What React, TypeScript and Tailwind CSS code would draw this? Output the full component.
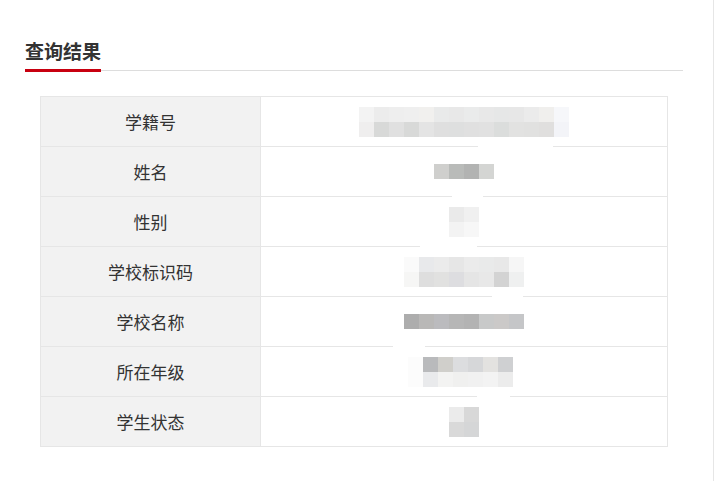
import React from "react";

type Mosaic = { cells: string[][]; offset?: number };

const rows: { label: string; mosaic: Mosaic }[] = [
    {
        label: "学籍号",
        mosaic: {
            cells: [
                ["#f3f3f3", "#ececec", "#eeeeee", "#efefef", "#f1f0ee", "#e9eaea", "#e8e8e8", "#eaebeb", "#e8e8e8", "#e6e7e7", "#e7e7e7", "#ebebeb", "#f0efed", "#f6f7fa"],
                ["#efeeee", "#d8d9d8", "#e0e0e0", "#d8d9d8", "#e4e4e4", "#dfdfdf", "#dedfdf", "#e0e0e0", "#e1e1e1", "#dbdddc", "#e2e2e1", "#e1e1e0", "#e0dfde", "#f3f4f8"],
            ],
        },
    },
    { label: "姓名", mosaic: { cells: [["#cfcfcd", "#b9bbb9", "#b2b3b2", "#d4d5d3"]] } },
    {
        label: "性别",
        mosaic: {
            cells: [
                ["#eaeaea", "#f0f0f0"],
                ["#f3f3f3", "#f7f7f7"],
            ],
        },
    },
    {
        label: "学校标识码",
        mosaic: {
            cells: [
                ["#fafafa", "#e8e9eb", "#ebebeb", "#e6e6e6", "#ebebeb", "#e9eaea", "#e8e8e8", "#f6f6f6"],
                ["#f6f6f5", "#dedede", "#e1e1e0", "#dddde0", "#e5e5e5", "#e8e8e8", "#d3d3d3", "#eff0f0"],
            ],
        },
    },
    {
        label: "学校名称",
        mosaic: { cells: [["#adadad", "#b9b8b7", "#bbbbbe", "#b6b6b6", "#b3b3b3", "#c8c9c9", "#cbc9c8", "#c5c6c8"]] },
    },
    {
        label: "所在年级",
        mosaic: {
            cells: [
                ["#fcfcfc", "#b9babc", "#d0cfcb", "#dcdddf", "#d6d7d9", "#e3e2e0", "#cfd0d2"],
                ["#fcfcfc", "#e9eaec", "#f3f3f2", "#f0f0ef", "#f1f1f1", "#f3f3f3", "#ececec"],
            ],
            offset: -8,
        },
    },
    {
        label: "学生状态",
        mosaic: {
            cells: [
                ["#ebebeb", "#d8d8d8"],
                ["#d9d9d9", "#d5d6d7"],
            ],
        },
    },
];

// white smudges from the blurred screenshot that cut through the row lines
const smudges = [
    { top: 48, left: 437, width: 75 },
    { top: 98, left: 411, width: 31 },
    { top: 148, left: 379, width: 57 },
    { top: 198, left: 451, width: 31 },
    { top: 248, left: 352, width: 32 },
    { top: 298, left: 436, width: 33 },
];

function MosaicBlock(props: Mosaic) {
    const { cells, offset } = { ...props };
    const size = 15;
    const w = cells[0].length * size;
    const h = cells.length * size;
    return (
        <svg width={w} height={h} viewBox={`0 0 ${w} ${h}`} style={offset ? { marginLeft: offset } : undefined}>
            {cells.map((row, r) =>
                row.map((c, i) => <rect key={`${r}-${i}`} x={i * size} y={r * size} width={size} height={size} fill={c} />)
            )}
        </svg>
    );
}

export default function App() {
    return (
        <div className="w-[717px] h-[481px] bg-white flex" style={{ fontFamily: '"Noto Sans CJK SC", "Microsoft YaHei", sans-serif' }}>
            <div className="w-[714px] border-r border-[#e6e6e6] px-[25px] pt-[34px]">
                <div className="w-[658px] border-b border-[#dddddd] flex">
                    <span className="text-[19px] leading-[34px] font-bold text-[#333] border-b-[3px] border-[#c80010] mb-[-2px] pb-[1px]">
                        查询结果
                    </span>
                </div>
                <div className="relative ml-[15px] mt-[25px] w-[628px] border border-[#e6e6e6]">
                    {rows.map((row, i) => (
                        <div key={row.label} className={`flex ${i > 0 ? "h-[50px] border-t border-[#e6e6e6]" : "h-[49px]"}`}>
                            <div className="w-[220px] bg-[#f2f2f2] border-r border-[#e6e6e6] flex items-center justify-center text-[17px] text-[#333]">
                                {row.label}
                            </div>
                            <div className="flex-1 flex items-center justify-center">
                                <MosaicBlock {...row.mosaic} />
                            </div>
                        </div>
                    ))}
                    {smudges.map((s, i) => (
                        <div key={i} className="absolute h-[3px] bg-white" style={{ top: s.top, left: s.left, width: s.width }} />
                    ))}
                </div>
            </div>
        </div>
    );
}
